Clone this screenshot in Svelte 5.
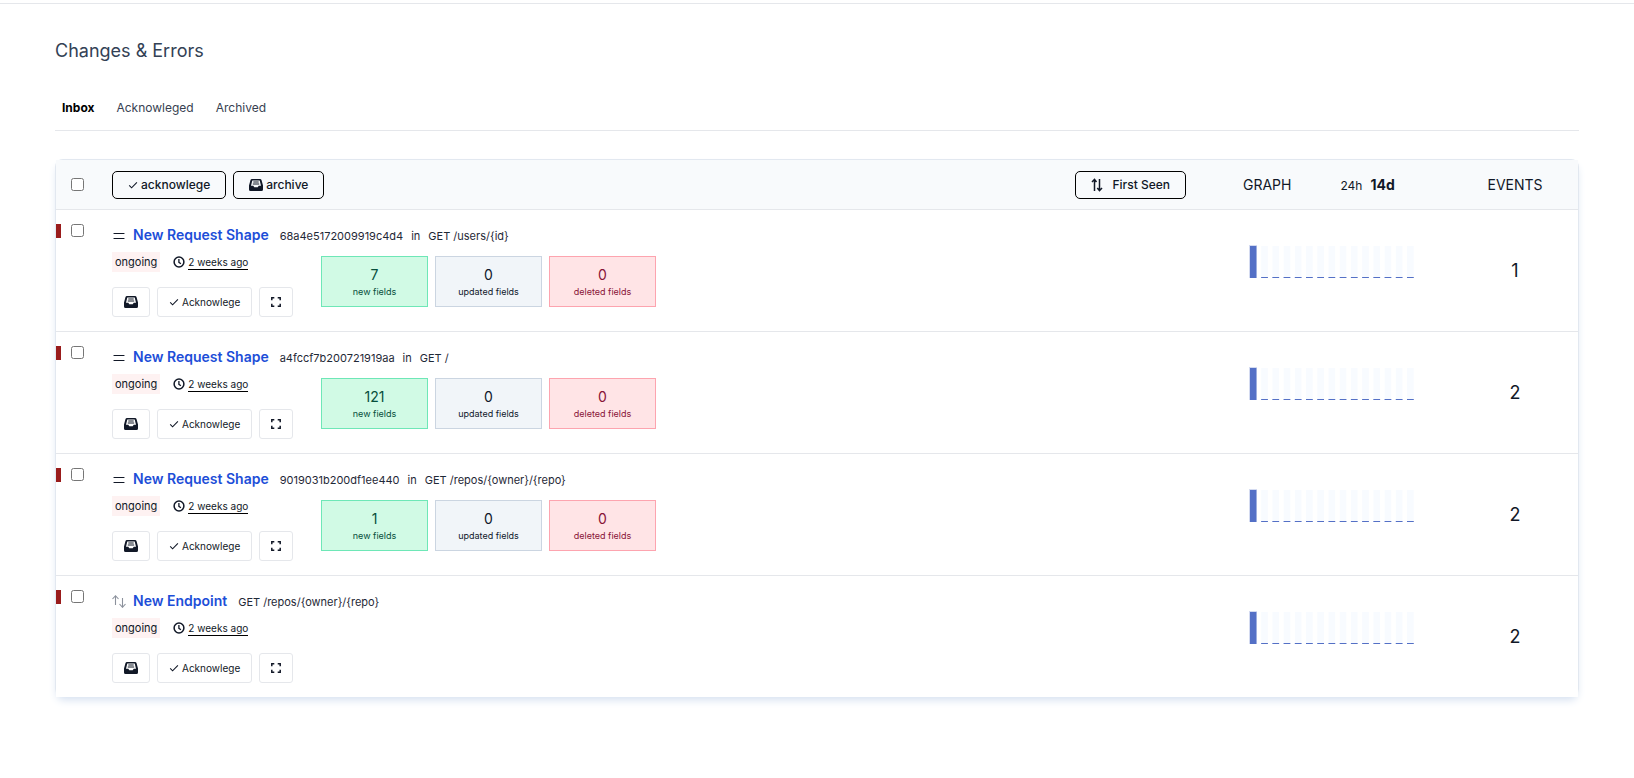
<script>
  const tabs = ['Inbox', 'Acknowleged', 'Archived']
  let activeTab = $state('Inbox')
  let range = $state('14d')

  const issues = [
    { kind: 'shape', title: 'New Request Shape', hash: '68a4e5172009919c4d4', endpoint: 'GET /users/{id}', fields: [7, 0, 0], events: 1 },
    { kind: 'shape', title: 'New Request Shape', hash: 'a4fccf7b200721919aa', endpoint: 'GET /', fields: [121, 0, 0], events: 2 },
    { kind: 'shape', title: 'New Request Shape', hash: '9019031b200df1ee440', endpoint: 'GET /repos/{owner}/{repo}', fields: [1, 0, 0], events: 2 },
    { kind: 'endpoint', title: 'New Endpoint', hash: '', endpoint: 'GET /repos/{owner}/{repo}', fields: null, events: 2 }
  ]

  const fieldTypes = ['new', 'updated', 'deleted']
  const days = Array.from({ length: 15 }, (_, i) => (i === 0 ? 1 : 0))
</script>

{#snippet check()}
  <svg viewBox="0 0 10 10" width="10" height="10" aria-hidden="true">
    <path d="M1.2 5.4 3.6 7.8 8.9 2.4" fill="none" stroke="currentColor" stroke-width="1.1" />
  </svg>
{/snippet}

{#snippet inbox()}
  <svg viewBox="0 0 14 12" width="14" height="12" aria-hidden="true">
    <path
      fill="currentColor"
      fill-rule="evenodd"
      d="M3 0h8a1.6 1.6 0 0 1 1.5 1.1L14 6.6v3.9a1.5 1.5 0 0 1-1.5 1.5h-11A1.5 1.5 0 0 1 0 10.5V6.6L1.5 1.1A1.6 1.6 0 0 1 3 0Zm.3 1.5L2 6.7h2.3l1 1.6h3.4l1-1.6H12l-1.3-5.2Z"
    />
    <path d="M4.3 3h5.4M3.8 5h6.4" stroke="currentColor" stroke-width="1" />
  </svg>
{/snippet}

<div class="page">
  <main>
    <h1>Changes &amp; Errors</h1>

    <nav class="tabs">
      {#each tabs as tab}
        <a
          href={'#' + tab.toLowerCase()}
          class:active={activeTab === tab}
          onclick={() => (activeTab = tab)}
        >{tab}</a>
      {/each}
    </nav>

    <section class="card">
      <header class="bar">
        <div class="select">
          <input type="checkbox" aria-label="Select all" />
        </div>
        <div class="bulk">
          <button class="outline">{@render check()}acknowlege</button>
          <button class="outline">{@render inbox()}archive</button>
        </div>
        <button class="outline sort">
          <svg viewBox="0 0 12 14" width="12" height="14" aria-hidden="true">
            <path d="M3.5 13V2M1 4l2.5-2.7L5.5 4M8.5 1v11M6.3 10l2.2 2.700L11 10" fill="none" stroke="currentColor" stroke-width="1.5" />
          </svg>
          First Seen
        </button>
        <div class="graph graph-head">
          <span>GRAPH</span>
          <div class="ranges">
            <button class:active={range === '24h'} onclick={() => (range = '24h')}>24h</button>
            <button class:active={range === '14d'} onclick={() => (range = '14d')}>14d</button>
          </div>
        </div>
        <div class="events-head">EVENTS</div>
      </header>

      {#each issues as issue}
        <article class="row">
          <div class="select">
            <span class="marker"></span>
            <input type="checkbox" aria-label={'Select ' + issue.title} />
          </div>

          <div class="info">
            <div class="heading">
              {#if issue.kind === 'shape'}
                <svg viewBox="0 0 14 14" width="14" height="14" aria-hidden="true">
                  <path d="M2 5.5h10M2 10.5h10" stroke="#111827" stroke-width="1.2" stroke-linecap="round" />
                </svg>
              {:else}
                <svg viewBox="0 0 14 14" width="14" height="14" aria-hidden="true">
                  <path d="M3.5 11V2M.5 5l3-3.3L6.5 5M10.5 4v9M7.5 10l3 3.3L13.5 10" fill="none" stroke="#8b919c" stroke-width="1.1" />
                </svg>
              {/if}
              <a class="title" href="#issue">{issue.title}</a>
              <div class="source">
                {#if issue.hash}
                  <span>{issue.hash}</span>
                  <span>in</span>
                {/if}
                <span>{issue.endpoint}</span>
              </div>
            </div>

            <div class="detail">
              <div class="side">
                <div class="meta">
                  <span class="status">ongoing</span>
                  <svg viewBox="0 0 12 12" width="12" height="12" aria-hidden="true">
                    <circle cx="6" cy="6" r="4.9" fill="none" stroke="#111827" stroke-width="1.5" />
                    <path d="M5.9 3v3.3l2 1.4" fill="none" stroke="#111827" stroke-width="1.3" />
                  </svg>
                  <span class="time">2 weeks ago</span>
                </div>
                <div class="actions">
                  <button aria-label="Archive">{@render inbox()}</button>
                  <button>{@render check()}Acknowlege</button>
                  <button aria-label="Expand">
                    <svg viewBox="0 0 10 10" width="10" height="10" aria-hidden="true">
                      <path d="M.8 3.3V.8h2.500M6.700.8h2.500v2.500M9.200 6.700v2.500H6.700M3.300 9.200H.8V6.700" fill="none" stroke="#111827" stroke-width="1.5" />
                    </svg>
                  </button>
                </div>
              </div>

              {#if issue.fields}
                <div class="fields">
                  {#each fieldTypes as type, i}
                    <div class="field {type}">
                      <strong>{issue.fields[i]}</strong>
                      <small>{type} fields</small>
                    </div>
                  {/each}
                </div>
              {/if}
            </div>
          </div>

          <div class="graph">
            <svg class="chart" viewBox="0 0 166 34" width="166" height="34" role="img" aria-label="Events, last 14 days">
              {#each days as value, i}
                <rect x={1 + i * 11.22} y="1" width="6.6" height="32" fill="#f8fbff" />
                {#if value}
                  <rect x="0" y="0" width="8" height="33" fill="#5470c6" fill-opacity="0.25" />
                  <rect x="1" y="1" width="6.4" height="32" fill="#5470c6" />
                {:else}
                  <rect x={0.9 + i * 11.22} y="32" width="6.8" height="1" fill="#5470c6" />
                {/if}
              {/each}
            </svg>
          </div>
          <div class="count">{issue.events}</div>
        </article>
      {/each}
    </section>
  </main>
</div>

<style>
  :global(body) {
    background: #fff;
  }

  .page {
    border-top: 1px solid #e5e7eb;
    margin-top: 3px;
    font-family: Inter, 'Liberation Sans', sans-serif;
    font-size: 14px;
    color: #111827;
  }

  main {
    padding: 33px 55px 80px;
  }

  a {
    color: inherit;
    text-decoration: none;
  }

  button {
    font: inherit;
    color: inherit;
    background: transparent;
    border: 0;
    padding: 0;
    cursor: pointer;
    display: flex;
    align-items: center;
    justify-content: center;
    box-sizing: border-box;
  }

  svg {
    display: block;
    flex: none;
  }

  h1 {
    margin: 0;
    font-size: 18px;
    line-height: 28px;
    font-weight: 400;
    color: #334155;
  }

  .tabs {
    display: flex;
    gap: 22px;
    margin-top: 32px;
    padding: 0 7px 11px;
    border-bottom: 1px solid #e5e7eb;
    font-size: 12px;
    line-height: 22px;
    color: #374151;
  }

  .tabs .active {
    font-weight: 700;
    color: #000;
  }

  .card {
    margin-top: 28px;
    border: 1px solid #e2e8f0;
    border-bottom: 0;
    border-radius: 8px;
    box-shadow: 0 5px 8px -2px #d5e0f0;
  }

  .bar {
    display: flex;
    align-items: center;
    height: 49px;
    background: #f8fafc;
    border-bottom: 1px solid #e5e7eb;
  }

  .select {
    position: relative;
    flex: none;
    width: 56px;
    display: flex;
  }

  input {
    margin: 0 0 0 15px;
    width: 13px;
    height: 13px;
  }

  .bulk {
    display: flex;
    gap: 7px;
    margin-right: auto;
  }

  .outline {
    height: 28px;
    gap: 3px;
    padding: 0 15px;
    border: 1px solid #000;
    border-radius: 5px;
    font-size: 12px;
    font-weight: 500;
  }

  .sort {
    gap: 9px;
    margin-right: 57px;
  }

  .graph {
    flex: none;
    width: 209px;
  }

  .graph-head {
    display: flex;
    align-items: center;
  }

  .ranges {
    display: flex;
    align-items: baseline;
    gap: 8px;
    margin-left: 49px;
    font-size: 12px;
  }

  .ranges .active {
    font-size: 14px;
    font-weight: 700;
  }

  .events-head,
  .count {
    flex: none;
    width: 126px;
    text-align: center;
  }

  .row {
    display: flex;
    background: #fff;
    padding: 13px 0 14px;
  }

  .row + .row {
    border-top: 1px solid #e5e7eb;
  }

  .row .select {
    align-items: flex-start;
    padding-top: 1px;
  }

  .marker {
    position: absolute;
    left: 0;
    top: 1px;
    width: 5px;
    height: 14px;
    background: #991b1b;
  }

  .info {
    flex: 1;
    min-width: 0;
  }

  .heading {
    display: flex;
    align-items: center;
    height: 24px;
    line-height: 24px;
  }

  .title {
    margin-left: 7px;
    font-weight: 600;
    color: #1d4ed8;
  }

  .source {
    display: flex;
    gap: 8px;
    margin-left: 11px;
    padding-top: 2px;
    font-size: 11px;
    color: #1f2937;
  }

  .detail {
    display: flex;
    gap: 28px;
    margin-top: 5px;
    font-size: 10px;
  }

  .side {
    width: 181px;
  }

  .meta {
    display: flex;
    align-items: center;
    line-height: 20px;
  }

  .status {
    padding: 0 3px;
    margin-right: 13px;
    background: #fef2f2;
    font-size: 11px;
  }

  .time {
    margin-left: 3px;
    line-height: 14px;
    border-bottom: 1px solid #000;
  }

  .actions {
    display: flex;
    gap: 7px;
    margin-top: 15px;
  }

  .actions button {
    height: 30px;
    padding: 0 11px;
    border: 1px solid #e5e7eb;
    border-radius: 3px;
    gap: 3px;
  }

  .fields {
    display: flex;
    gap: 7px;
    margin-top: 4px;
  }

  .field {
    width: 107px;
    height: 51px;
    box-sizing: border-box;
    display: flex;
    flex-direction: column;
    align-items: center;
    justify-content: center;
    border: 1px solid;
  }

  .field strong {
    font-size: 14px;
    font-weight: 400;
    line-height: 20px;
  }

  .field small {
    font-size: 9px;
    line-height: 14px;
  }

  .new {
    background: #d1fae5;
    border-color: #6ee7b7;
    color: #064e3b;
  }

  .updated {
    background: #f1f5f9;
    border-color: #cbd5e1;
    color: #0f172a;
  }

  .deleted {
    background: #ffe4e6;
    border-color: #fda4af;
    color: #881337;
  }

  .chart {
    margin: 22px 0 0 6px;
  }

  .count {
    align-self: center;
    font-size: 18px;
  }
</style>
